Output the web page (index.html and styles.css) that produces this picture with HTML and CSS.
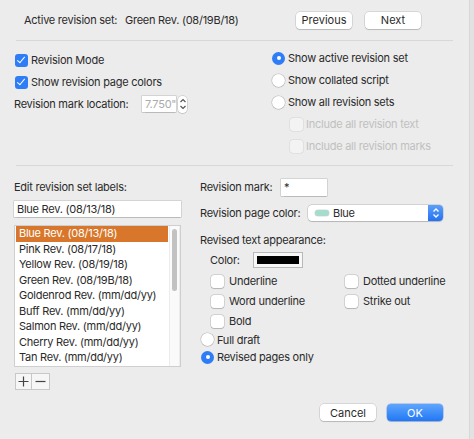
FILE: index.html
```html
<!DOCTYPE html>
<html lang="en">
  <head>
    <meta charset="utf-8" />
    <title>Revisions</title>
    <link rel="stylesheet" href="styles.css">
  </head>
  <body>
    <div class="dialog">
      <div class="top">
        <span class="top-label">Active revision set:</span>
        <span class="top-value">Green Rev. (08/19B/18)</span>
        <button class="btn prev">Previous</button>
        <button class="btn next">Next</button>
      </div>
      <div class="sep"></div>

      <section class="upper">
        <div class="col-left">
          <div class="row"><span class="check on"></span>Revision Mode</div>
          <div class="row"><span class="check on"></span>Show revision page colors</div>
          <div class="row">
            <span class="mark-label">Revision mark location:</span>
            <span class="field num">7.750"</span>
            <span class="stepper">
              <svg width="8" height="14" viewBox="0 0 8 14"><path d="M1.5 5 L4 2.5 L6.5 5 M1.5 9 L4 11.5 L6.5 9" fill="none" stroke="#555" stroke-width="1.2"/></svg>
            </span>
          </div>
        </div>
        <div class="col-right">
          <div class="row"><span class="radio on"></span>Show active revision set</div>
          <div class="row"><span class="radio"></span>Show collated script</div>
          <div class="row"><span class="radio"></span>Show all revision sets</div>
          <div class="row sub disabled"><span class="check off"></span>Include all revision text</div>
          <div class="row sub disabled"><span class="check off"></span>Include all revision marks</div>
        </div>
      </section>
      <div class="sep"></div>

      <section class="lower">
        <div class="col-left">
          <div class="row">Edit revision set labels:</div>
          <div class="field label-field">Blue Rev. (08/13/18)</div>
          <div class="list">
            <ul class="items">
              <li class="selected">Blue Rev. (08/13/18)</li>
              <li>Pink Rev. (08/17/18)</li>
              <li>Yellow Rev. (08/19/18)</li>
              <li>Green Rev. (08/19B/18)</li>
              <li>Goldenrod Rev. (mm/dd/yy)</li>
              <li>Buff Rev. (mm/dd/yy)</li>
              <li>Salmon Rev. (mm/dd/yy)</li>
              <li>Cherry Rev. (mm/dd/yy)</li>
              <li>Tan Rev. (mm/dd/yy)</li>
            </ul>
            <div class="scroll"><div class="thumb"></div></div>
          </div>
          <div class="plusminus">
            <span class="pm"><svg width="11" height="11" viewBox="0 0 11 11"><path d="M5.5 0.5 V10.5 M0.5 5.5 H10.5" stroke="#444" stroke-width="1.2"/></svg></span><span class="pm"><svg width="11" height="11" viewBox="0 0 11 11"><path d="M0.5 5.5 H10.5" stroke="#444" stroke-width="1.2"/></svg></span>
          </div>
        </div>
        <div class="col-right">
          <div class="row r-mark"><span class="r-label">Revision mark:</span><span class="field mark-field">*</span></div>
          <div class="row r-color"><span class="r-label">Revision page color:</span>
            <span class="popup">
              <span class="swatch"></span>Blue
              <span class="popup-arrows">
                <svg width="8" height="12" viewBox="0 0 8 12"><path d="M1.5 4.5 L4 2 L6.5 4.5 M1.5 7.5 L4 10 L6.5 7.5" fill="none" stroke="#fff" stroke-width="1.3"/></svg>
              </span>
            </span>
          </div>
          <div class="row r-appear">Revised text appearance:</div>
          <div class="row r-well"><span class="r-label">Color:</span><span class="well"><span class="well-fill"></span></span></div>
          <div class="styles">
            <div class="srow"><span class="check off"></span>Underline</div>
            <div class="srow"><span class="check off"></span>Dotted underline</div>
            <div class="srow"><span class="check off"></span>Word underline</div>
            <div class="srow"><span class="check off"></span>Strike out</div>
            <div class="srow"><span class="check off"></span>Bold</div>
          </div>
          <div class="rrow"><span class="radio"></span>Full draft</div>
          <div class="rrow"><span class="radio on"></span>Revised pages only</div>
        </div>
      </section>

      <div class="footer">
        <button class="btn">Cancel</button>
        <button class="btn primary">OK</button>
      </div>
    </div>
  </body>
</html>
```

FILE: styles.css
```css
html,
body {
  margin: 0;
  background: #e2e2e2;
  font-family: Inter, "Liberation Sans", sans-serif;
  font-size: 11px;
  letter-spacing: -0.25px;
  color: #2a2a2a;
}

.dialog {
  width: 470px;
  height: 439px;
  background: #ececec;
  border-right: 1px solid #d8d8d8;
  box-sizing: border-box;
}

.sep {
  height: 1px;
  margin: 0 16px;
  background: #d8d8d8;
}

/* top row */
.top {
  height: 40px;
  display: flex;
  align-items: center;
  padding-left: 24px;
}

.top-label {
  width: 101px;
  flex: none;
}

.top-value {
  width: 171px;
  flex: none;
}

.btn {
  font: inherit;
  color: #2a2a2a;
  height: 17px;
  width: 56px;
  padding: 0;
  border: none;
  border-radius: 4px;
  background: #fff;
  box-shadow: 0 0 0 0.5px rgba(0, 0, 0, 0.18), 0 1px 1px rgba(0, 0, 0, 0.14);
}

.btn.next {
  margin-left: 13px;
}

.btn.primary {
  color: #fff;
  background: linear-gradient(#5fa5fc, #2178f5);
  box-shadow: 0 0 0 0.5px rgba(0, 60, 200, 0.4), 0 1px 1px rgba(0, 0, 0, 0.14);
}

.row {
  height: 22px;
  display: flex;
  align-items: center;
}

/* checkboxes and radios */
.check,
.radio {
  width: 13px;
  height: 13px;
  box-sizing: border-box;
  flex: none;
  margin-right: 3px;
  position: relative;
}

.check {
  border-radius: 3px;
  background: #fff;
  box-shadow: 0 0 0 0.5px rgba(0, 0, 0, 0.2), 0 0.5px 1px rgba(0, 0, 0, 0.15);
}

.check.on {
  background: #2f7df6;
  box-shadow: none;
}

.check.on::after {
  content: "";
  position: absolute;
  left: 4px;
  top: 1.5px;
  width: 3px;
  height: 7px;
  border: solid #fff;
  border-width: 0 1.6px 1.6px 0;
  transform: rotate(40deg);
}

.radio {
  border-radius: 50%;
  background: #fff;
  box-shadow: 0 0 0 0.5px rgba(0, 0, 0, 0.2), 0 0.5px 1px rgba(0, 0, 0, 0.15);
}

.radio.on {
  background: #2f7df6;
  box-shadow: none;
}

.radio.on::after {
  content: "";
  position: absolute;
  left: 4.5px;
  top: 4.5px;
  width: 4px;
  height: 4px;
  border-radius: 50%;
  background: #fff;
}

.disabled {
  color: #c0c0c0;
}

.disabled .check {
  background: #f3f3f3;
  box-shadow: 0 0 0 0.5px rgba(0, 0, 0, 0.1);
}

/* upper section */
.upper {
  display: grid;
  grid-template-columns: 258px 1fr;
  padding-left: 14px;
  height: 124px;
}

.upper .col-left {
  padding-top: 8px;
}

.upper .col-left .check {
  margin-left: 1px;
}

.upper .col-right {
  padding-top: 6px;
}

.sub {
  padding-left: 18px;
}

.mark-label {
  width: 128px;
  flex: none;
}

.field {
  background: #fff;
  box-shadow: 0 0 0 0.5px rgba(0, 0, 0, 0.2), 0 0.5px 1px rgba(0, 0, 0, 0.12);
  box-sizing: border-box;
  display: flex;
  align-items: center;
}

.num {
  width: 34px;
  height: 16px;
  padding-left: 3px;
  color: #ababab;
  white-space: nowrap;
}

.stepper {
  margin-left: 2px;
  width: 9px;
  height: 17px;
  border-radius: 4px;
  background: #fff;
  box-shadow: 0 0 0 0.5px rgba(0, 0, 0, 0.2), 0 0.5px 1px rgba(0, 0, 0, 0.12);
  display: flex;
  align-items: center;
  justify-content: center;
}

/* lower section */
.lower {
  display: grid;
  grid-template-columns: 167px 1fr;
  column-gap: 19px;
  padding-left: 14px;
  padding-top: 10px;
}

.label-field {
  margin-top: 3px;
  height: 16px;
  padding-left: 3px;
}

.list {
  margin-top: 8px;
  height: 142px;
  background: #fff;
  border: 1px solid #cfcfcf;
  box-sizing: border-box;
  display: flex;
  padding-left: 1px;
}

.items {
  list-style: none;
  margin: 0;
  padding: 0;
  width: 154px;
}

.items li {
  height: 15.5px;
  line-height: 15.5px;
  padding-left: 3px;
  white-space: nowrap;
}

.items li.selected {
  background: #d8772b;
  color: #fff;
}

.scroll {
  width: 9px;
  margin-left: 1px;
  border-left: 1px solid #ececec;
  border-right: 1px solid #ececec;
  background: #fafafa;
  padding-top: 3px;
}

.thumb {
  width: 5px;
  height: 62px;
  margin-left: 2px;
  border-radius: 3px;
  background: #c2c2c2;
}

.plusminus {
  margin-top: 6px;
  margin-left: 1px;
  display: flex;
}

.pm {
  width: 17px;
  height: 17px;
  box-sizing: border-box;
  background: #f6f6f6;
  border: 1px solid #c8c8c8;
  display: flex;
  align-items: center;
  justify-content: center;
}

.pm + .pm {
  width: 18px;
  border-left: none;
}

.r-mark .r-label {
  width: 81px;
}

.mark-field {
  width: 46px;
  height: 17px;
  padding-left: 3px;
}

.r-color {
  margin-top: 4px;
}

.r-color .r-label {
  width: 108px;
}

.popup {
  width: 135px;
  height: 16px;
  border-radius: 4px;
  background: #fff;
  box-shadow: 0 0 0 0.5px rgba(0, 0, 0, 0.2), 0 0.5px 1px rgba(0, 0, 0, 0.14);
  display: flex;
  align-items: center;
  overflow: hidden;
}

.swatch {
  width: 14px;
  height: 6px;
  border-radius: 3px;
  background: #a6dccd;
  box-shadow: 0 0 0 0.5px rgba(0, 0, 0, 0.15);
  margin: 0 4px 0 7px;
}

.popup-arrows {
  margin-left: auto;
  width: 15px;
  height: 16px;
  background: linear-gradient(#5d9ff9, #2472f2);
  display: flex;
  align-items: center;
  justify-content: center;
}

.r-appear {
  margin-top: 5px;
}

.r-well {
  height: 18px;
  padding-left: 10px;
}

.r-well .r-label {
  width: 43px;
}

.well {
  width: 50px;
  height: 16px;
  box-sizing: border-box;
  border: 1px solid #b8b8b8;
  background: #f7f7f7;
  padding: 3px;
}

.well-fill {
  display: block;
  height: 8px;
  background: #000;
}

.styles {
  margin-top: 2px;
  display: grid;
  grid-template-columns: 134px 1fr;
  padding-left: 11px;
}

.srow {
  height: 20px;
  display: flex;
  align-items: center;
}

.srow .check {
  margin-right: 5px;
}

.rrow {
  height: 17.5px;
  display: flex;
  align-items: center;
  padding-left: 1px;
}

.footer {
  display: flex;
  justify-content: flex-end;
  gap: 11px;
  padding: 14px 26px 0 0;
}
```
